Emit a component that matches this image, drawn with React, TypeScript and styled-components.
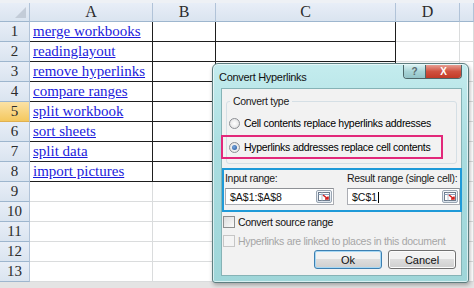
import React from "react";
import styled, { createGlobalStyle, css } from "styled-components";

const GlobalStyle = createGlobalStyle`
  html, body {
    margin: 0;
    padding: 0;
    background: #e4e4e4;
    overflow: hidden;
  }
  * { box-sizing: border-box; }
`;

const links = [
  "merge workbooks",
  "readinglayout",
  "remove hyperlinks",
  "compare ranges",
  "split workbook",
  "sort sheets",
  "split data",
  "import pictures",
];

const columns = ["A", "B", "C", "D", ""];
const rows = Array.from({ length: 13 }, (_, i) => i + 1);
const activeRow = 5;

const Page = styled.div`
  position: relative;
  width: 474px;
  height: 288px;
`;

const Sheet = styled.div`
  display: grid;
  grid-template-columns: 30px 123px 63px 180px 64px 1fr;
  grid-template-rows: 19px;
  grid-auto-rows: 20px;
  padding-top: 3px;
  background: #eef1f5;
  font-family: "Liberation Serif", "Times New Roman", serif;
`;

const headerBg = css`
  background: linear-gradient(#e8eef7, #dae4f0);
  color: #2b2b2b;
  border-right: 1px solid #b1c3d8;
  border-bottom: 1px solid #9eb6ce;
`;

const Corner = styled.div`
  ${headerBg};
  position: relative;
  &::after {
    content: "";
    position: absolute;
    right: 3px;
    bottom: 3px;
    border-style: solid;
    border-width: 0 0 11px 11px;
    border-color: transparent transparent #c3ccd8 transparent;
  }
`;

const ColHead = styled.div`
  ${headerBg};
  display: flex;
  align-items: center;
  justify-content: center;
  font-size: 16px;
`;

const RowHead = styled.div<{ $active?: boolean }>`
  ${headerBg};
  display: flex;
  align-items: center;
  justify-content: center;
  font-size: 15px;
  ${(p) =>
    p.$active &&
    css`
      background: linear-gradient(#fbe2a6, #f4c85e);
      border-bottom-color: #e0b050;
    `}
`;

const Cell = styled.div<{ $dark?: boolean }>`
  background: #fff;
  border-right: 1px solid ${(p) => (p.$dark ? "#1e1e1e" : "#dadcdd")};
  border-bottom: 1px solid ${(p) => (p.$dark ? "#1e1e1e" : "#dadcdd")};
  display: flex;
  align-items: center;
  padding-left: 3px;
  overflow: hidden;
  white-space: nowrap;
`;

const Link = styled.a`
  color: #1c1cdc;
  text-decoration: underline;
  font-size: 15px;
  cursor: pointer;
`;

const BottomStrip = styled.div`
  height: 6px;
  background: #e4e4e4;
`;

/* ---------- dialog ---------- */

const Dialog = styled.div`
  position: absolute;
  left: 212px;
  top: 63px;
  width: 257px;
  height: 220px;
  display: flex;
  flex-direction: column;
  padding: 0 6px 6px 8px;
  border: 1px solid #5e7e80;
  border-radius: 6px 6px 3px 3px;
  background: linear-gradient(#c4ecee, #a9dde0 40%, #9fd6d9);
  box-shadow: 0 0 0 1px rgba(255, 255, 255, 0.6) inset, 1px 2px 4px rgba(0, 0, 0, 0.3);
  font-family: "Liberation Sans", Arial, sans-serif;
  font-size: 10.5px;
  letter-spacing: -0.3px;
  color: #000;
  white-space: nowrap;
`;

const TitleBar = styled.div`
  height: 24px;
  display: flex;
  justify-content: space-between;
`;

const Title = styled.span`
  align-self: center;
  padding-top: 1px;
  margin-left: -2px;
  font-size: 11px;
  color: #111;
`;

const CaptionButtons = styled.div`
  display: flex;
  margin-top: 1px;
  height: 14px;
  border: 1px solid #4d6669;
  border-top: none;
  border-radius: 0 0 4px 4px;
  overflow: hidden;
`;

const CaptionButton = styled.div<{ $close?: boolean }>`
  display: flex;
  align-items: center;
  justify-content: center;
  width: ${(p) => (p.$close ? "36px" : "21px")};
  font-size: 10px;
  font-weight: bold;
  letter-spacing: 0;
  color: ${(p) => (p.$close ? "#fff" : "#5b6b6e")};
  background: ${(p) =>
    p.$close
      ? "linear-gradient(#e79e93, #d0513f 50%, #c23a27)"
      : "linear-gradient(#d8f1f2, #a8d4d7 50%, #93c4c8)"};
  border-left: ${(p) => (p.$close ? "1px solid #4d6669" : "none")};
`;

const Client = styled.div`
  flex: 1;
  display: flex;
  flex-direction: column;
  background: #f2f2f2;
  border: 1px solid #86b3b6;
  padding: 0 5px 6px 0;
`;

const Group = styled.fieldset`
  margin: 5px 0 0 4px;
  width: 231px;
  padding: 0 0 4px 2px;
  border: 1px solid #d5dfe5;
  border-radius: 3px;
`;

const Legend = styled.legend`
  padding: 0 3px;
  margin-left: 1px;
  line-height: 14px;
  color: #1a1a1a;
`;

const OptionRow = styled.label<{ $marked?: boolean }>`
  display: flex;
  align-items: center;
  gap: 4px;
  height: 16px;
  margin-top: 7px;
  ${(p) =>
    p.$marked &&
    css`
      height: 24px;
      width: 222px;
      margin: 4px 0 0 -8px;
      padding-left: 6px;
      border: 2px solid #e2287a;
    `}
`;

const Radio = styled.span<{ $checked?: boolean }>`
  width: 11px;
  height: 11px;
  border-radius: 50%;
  border: 1px solid #8c8f94;
  background: radial-gradient(circle, #ffffff, #dcdcdc);
  display: flex;
  align-items: center;
  justify-content: center;
  flex-shrink: 0;
  &::after {
    content: "";
    display: ${(p) => (p.$checked ? "block" : "none")};
    width: 5px;
    height: 5px;
    border-radius: 50%;
    background: radial-gradient(circle at 40% 40%, #7aa9e0, #1c4f95);
  }
`;

const RangeBox = styled.div`
  margin-top: 4px;
  width: 240px;
  height: 44px;
  border: 2px solid #1f9ad8;
  display: grid;
  grid-template-columns: 109px 113px;
  column-gap: 13px;
  padding: 0 0 0 1px;
`;

const RangeField = styled.div`
  display: flex;
  flex-direction: column;
`;

const FieldLabel = styled.span`
  height: 18px;
  line-height: 15px;
  padding-top: 1px;
  color: #1a1a1a;
`;

const InputWrap = styled.div`
  display: flex;
  align-items: center;
  height: 17px;
  background: #fff;
  border: 1px solid #abadb3;
  border-top-color: #8e9196;
  padding: 0 1px 0 4px;
`;

const InputText = styled.span`
  flex: 1;
  color: #111;
  letter-spacing: 0;
`;

const Caret = styled.span`
  display: inline-block;
  width: 1px;
  height: 11px;
  margin-left: 1px;
  vertical-align: -2px;
  background: #000;
`;

const RefButton = styled.span`
  width: 16px;
  height: 13px;
  display: flex;
  align-items: center;
  justify-content: center;
  border: 1px solid #9aa6b3;
  border-radius: 2px;
  background: linear-gradient(#f4f7fb, #d9e2ec);
`;

const CheckRow = styled.label<{ $disabled?: boolean }>`
  display: flex;
  align-items: center;
  gap: 3px;
  height: 13px;
  margin: 3px 0 0 1px;
  color: ${(p) => (p.$disabled ? "#a6a6a6" : "#111")};
  & + & {
    margin-top: 6px;
  }
`;

const CheckBox = styled.span<{ $disabled?: boolean }>`
  width: 12px;
  height: 12px;
  flex-shrink: 0;
  border: 1px solid ${(p) => (p.$disabled ? "#c6c6c6" : "#8e8f8f")};
  background: ${(p) =>
    p.$disabled ? "#f4f4f4" : "linear-gradient(135deg, #dcdcdc, #fbfbfb)"};
`;

const ButtonRow = styled.div`
  margin-top: auto;
  display: flex;
  justify-content: flex-end;
  gap: 6px;
`;

const Button = styled.button<{ $default?: boolean }>`
  width: 68px;
  height: 19px;
  padding: 0;
  font-family: inherit;
  font-size: 11px;
  letter-spacing: 0;
  color: #111;
  border-radius: 3px;
  border: 1px solid ${(p) => (p.$default ? "#3c7fb1" : "#707070")};
  background: linear-gradient(#f2f2f2 45%, #dddddd 50%, #cfcfcf);
  box-shadow: ${(p) => (p.$default ? "inset 0 0 0 1px #a6d8f5" : "inset 0 0 0 1px #fcfcfc")};
`;

const RefIcon = () => (
  <svg width="12" height="9" viewBox="0 0 12 9">
    <rect x="0.5" y="0.5" width="11" height="8" fill="#fff" stroke="#6d7b8c" />
    <line x1="0.5" y1="2.5" x2="11.5" y2="2.5" stroke="#8aa0bd" />
    <line x1="4" y1="0.5" x2="4" y2="8.5" stroke="#b8c2cf" />
    <path d="M5 3 L10 7 M7 7 L10 7 L10 4.5" stroke="#d21f1f" strokeWidth="1.6" fill="none" />
  </svg>
);

export default function App() {
  return (
    <Page>
      <GlobalStyle />
      <Sheet>
        <Corner />
        {columns.map((c, i) => (
          <ColHead key={i}>{c}</ColHead>
        ))}
        {rows.map((r) => (
          <React.Fragment key={r}>
            <RowHead $active={r === activeRow}>{r}</RowHead>
            {columns.map((_, ci) => {
              const dark = r <= 8 && ci <= 2;
              return (
                <Cell key={ci} $dark={dark}>
                  {ci === 0 && links[r - 1] && <Link>{links[r - 1]}</Link>}
                </Cell>
              );
            })}
          </React.Fragment>
        ))}
      </Sheet>
      <BottomStrip />

      <Dialog>
        <TitleBar>
          <Title>Convert Hyperlinks</Title>
          <CaptionButtons>
            <CaptionButton>?</CaptionButton>
            <CaptionButton $close>X</CaptionButton>
          </CaptionButtons>
        </TitleBar>
        <Client>
          <Group>
            <Legend>Convert type</Legend>
            <OptionRow>
              <Radio />
              Cell contents replace hyperlinks addresses
            </OptionRow>
            <OptionRow $marked>
              <Radio $checked />
              Hyperlinks addresses replace cell contents
            </OptionRow>
          </Group>
          <RangeBox>
            <RangeField>
              <FieldLabel>Input range:</FieldLabel>
              <InputWrap>
                <InputText>$A$1:$A$8</InputText>
                <RefButton>
                  <RefIcon />
                </RefButton>
              </InputWrap>
            </RangeField>
            <RangeField>
              <FieldLabel>Result range (single cell):</FieldLabel>
              <InputWrap>
                <InputText>
                  $C$1
                  <Caret />
                </InputText>
                <RefButton>
                  <RefIcon />
                </RefButton>
              </InputWrap>
            </RangeField>
          </RangeBox>
          <CheckRow>
            <CheckBox />
            Convert source range
          </CheckRow>
          <CheckRow $disabled>
            <CheckBox $disabled />
            Hyperlinks are linked to places in this document
          </CheckRow>
          <ButtonRow>
            <Button $default>Ok</Button>
            <Button>Cancel</Button>
          </ButtonRow>
        </Client>
      </Dialog>
    </Page>
  );
}
